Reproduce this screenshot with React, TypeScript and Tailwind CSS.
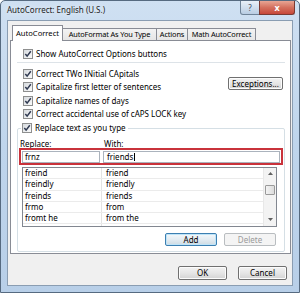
import type { ReactNode } from 'react'

const rows = [
  { from: 'freind', to: 'friend' },
  { from: 'freindly', to: 'friendly' },
  { from: 'freinds', to: 'friends' },
  { from: 'frmo', to: 'from' },
  { from: 'fromt he', to: 'from the' },
]

const options = [
  'Correct TWo INitial CApitals',
  'Capitalize first letter of sentences',
  'Capitalize names of days',
  'Correct accidental use of cAPS LOCK key',
]

function Check() {
  return (
    <span className="flex h-[10px] w-[10px] shrink-0 items-center justify-center border border-[#8e8f8f] bg-gradient-to-br from-[#d6dade] to-[#fbfbfb]">
      <svg viewBox="0 0 8 8" className="h-[8px] w-[8px]">
        <path d="M1.3 4.1 L3.1 6.1 L6.8 1.3" fill="none" stroke="#303a52" strokeWidth="1.5" />
      </svg>
    </span>
  )
}

function WinButton({
  children,
  className = '',
  kind = 'normal',
}: {
  children: ReactNode
  className?: string
  kind?: 'normal' | 'default' | 'disabled'
}) {
  const look =
    kind === 'default'
      ? 'border-[#3c7fb1] bg-gradient-to-b from-[#f4f8fb] via-[#e3ecf2] to-[#cfdbe3] text-black shadow-[inset_0_0_0_1px_#bfe4f8]'
      : kind === 'disabled'
        ? 'border-[#b9bdc0] bg-[#f4f4f4] text-[#9a9a9a]'
        : 'border-[#707070] bg-gradient-to-b from-[#f3f3f3] via-[#e6e6e6] to-[#d3d3d3] text-black shadow-[inset_0_0_0_1px_#fcfcfc]'
  return (
    <div className={`flex shrink-0 items-center justify-center whitespace-nowrap rounded-[2px] border leading-none ${look} ${className}`}>
      {children}
    </div>
  )
}

const tabIdle =
  '-ml-px flex h-[12px] items-center justify-center whitespace-nowrap border border-b-0 border-[#898c95] bg-gradient-to-b from-[#f3f3f3] to-[#e6e6e6] text-[7.4px] tracking-[-0.15px]'

export default function App() {
  return (
    <div className="h-[293px] w-[300px] overflow-hidden bg-white">
      <div className="flex h-full w-full flex-col whitespace-nowrap rounded-t-[5px] border border-[#566a80] bg-gradient-to-b from-[#cfe0f2] via-[#bfd5ec] to-[#b8cfe8] px-[6px] pb-[6px] font-['Noto_Sans',sans-serif] text-[8px] text-black">
        {/* title bar */}
        <div className="flex h-[19px] shrink-0 items-start">
          <span className="mt-[4px] text-[8px] leading-[10px] text-[#1e1e1e] [text-shadow:0_0_6px_#ffffff]">
            AutoCorrect: English (U.S.)
          </span>
          <div className="-mr-[2px] ml-auto flex">
            <div className="flex h-[14px] w-[20px] items-center justify-center rounded-bl-[3px] border border-t-0 border-[#6f8398] bg-gradient-to-b from-[#e9f0f8] to-[#b9cde3] text-[8px] leading-none text-[#3d4a5a]">
              ?
            </div>
            <div className="-ml-px flex h-[14px] w-[36px] items-center justify-center rounded-br-[3px] border border-t-0 border-[#7a3a33] bg-gradient-to-b from-[#e8a594] via-[#d4705e] to-[#c7473a] text-[9px] font-bold leading-none text-white">
              x
            </div>
          </div>
        </div>

        {/* client area */}
        <div className="flex flex-1 flex-col border border-[#8a9db2] bg-[#f0f0f0]">
          {/* tabs */}
          <div className="ml-[4px] flex h-[19px] shrink-0 items-end">
            <div className="relative z-10 -mb-px flex h-[16px] w-[51px] items-start justify-center border border-b-0 border-[#898c95] bg-white pt-[2px] text-[7.6px]">
              AutoCorrect
            </div>
            <div className={`${tabIdle} w-[95px]`}>AutoFormat As You Type</div>
            <div className={`${tabIdle} w-[32px]`}>Actions</div>
            <div className={`${tabIdle} w-[69px]`}>Math AutoCorrect</div>
          </div>

          {/* tab panel */}
          <div className="ml-[2px] flex h-[214px] w-[281px] shrink-0 flex-col border border-[#898c95] bg-white">
            <div className="ml-[12px] mt-[7px] flex h-[11px] items-center gap-[3px]">
              <Check />
              <span>Show AutoCorrect Options buttons</span>
            </div>
            <div className="ml-[6px] mr-[5px] mt-[3px] h-px bg-[#dde3e8]" />

            <div className="mt-[4px] flex">
              <div className="ml-[12px] flex flex-col">
                {options.map((o) => (
                  <div key={o} className="flex h-[13.5px] items-center gap-[3px]">
                    <Check />
                    <span>{o}</span>
                  </div>
                ))}
              </div>
              <WinButton className="ml-auto mr-[7px] mt-[10px] h-[13px] w-[55px]">Exceptions...</WinButton>
            </div>

            {/* replace group */}
            <div className="ml-[6px] mr-[5px] mt-[7px] flex h-[124px] flex-col rounded-[2px] border border-[#d5dfe5]">
              <div className="-mt-[7px] ml-[3px] flex h-[12px] items-center gap-[3px] self-start bg-white px-[1px]">
                <Check />
                <span className="pr-[1px]">Replace text as you type</span>
              </div>

              <div className="ml-[2px] mt-[5px] flex h-[9px] items-center leading-none">
                <span className="w-[84px]">Replace:</span>
                <span>With:</span>
              </div>

              <div className="ml-[1px] flex h-[17px] w-[264px] items-center border-2 border-[#c9323b]">
                <div className="ml-[1px] flex h-[12px] w-[78px] items-center border border-[#abb3bd] bg-white pl-[2px]">
                  frnz
                </div>
                <div className="ml-[3px] flex h-[12px] w-[177px] items-center border border-[#abb3bd] bg-white pl-[3px]">
                  friends
                  <span className="ml-px h-[8px] w-px bg-black" />
                </div>
              </div>

              <div className="ml-[4px] mt-[2px] flex h-[60px] w-[255px] border border-[#828790] bg-white">
                <div className="flex flex-1 flex-col overflow-hidden">
                  {rows.map((r) => (
                    <div key={r.from} className="flex h-[11.3px] shrink-0 items-center border-b border-[#ebebeb]">
                      <span className="flex h-full w-[79px] items-center border-r border-[#e3e3e3] pl-[2px]">
                        {r.from}
                      </span>
                      <span className="pl-[4px]">{r.to}</span>
                    </div>
                  ))}
                  <div className="flex flex-1">
                    <span className="w-[79px] border-r border-[#e3e3e3]" />
                  </div>
                </div>
                <div className="flex w-[13px] flex-col items-center border-l border-[#e8e8e8] bg-[#f3f3f3]">
                  <svg viewBox="0 0 7 4" className="mt-[4px] h-[3px] w-[5px]">
                    <path d="M0 4 L3.5 0 L7 4 Z" fill="#606060" />
                  </svg>
                  <div className="mt-[10px] h-[10px] w-[10px] rounded-[1px] border border-[#9a9a9a] bg-gradient-to-r from-[#f3f3f3] to-[#dcdcdc]" />
                  <svg viewBox="0 0 7 4" className="mb-[5px] mt-auto h-[3px] w-[5px]">
                    <path d="M0 0 L3.5 4 L7 0 Z" fill="#606060" />
                  </svg>
                </div>
              </div>

              <div className="ml-[147px] mt-[6px] flex gap-[7px]">
                <WinButton kind="default" className="h-[13px] w-[52px]">Add</WinButton>
                <WinButton kind="disabled" className="h-[13px] w-[52px]">Delete</WinButton>
              </div>
            </div>
          </div>

          {/* dialog buttons */}
          <div className="mr-[5px] mt-[12px] flex justify-end gap-[11px]">
            <WinButton className="h-[14px] w-[49px]">OK</WinButton>
            <WinButton className="h-[14px] w-[49px]">Cancel</WinButton>
          </div>
        </div>
      </div>
    </div>
  )
}
